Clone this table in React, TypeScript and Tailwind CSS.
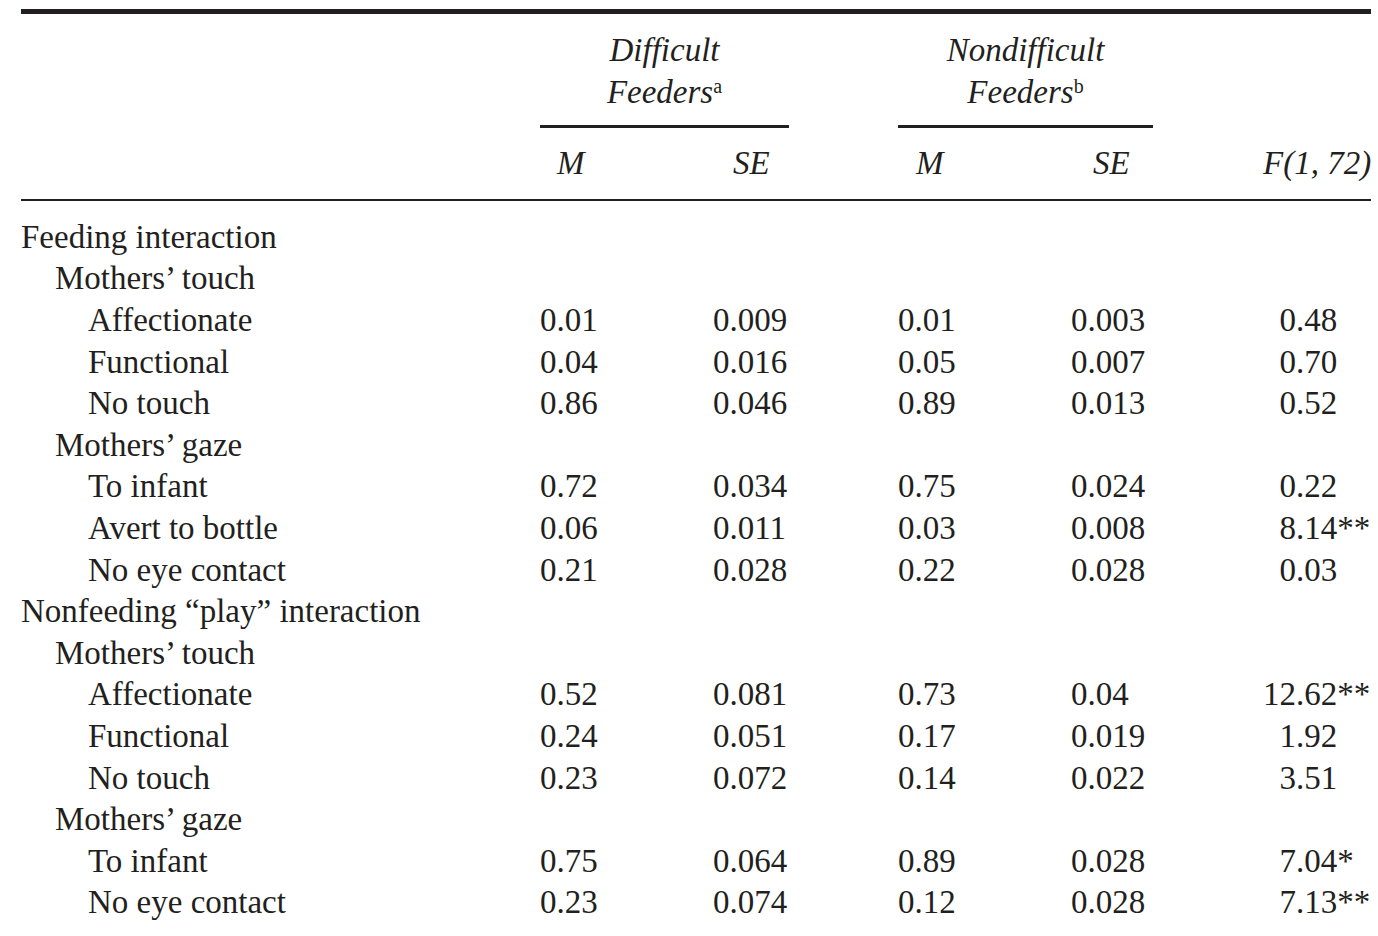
const rows: { label: string; level: number; vals?: string[]; f?: [string, string] }[] = [
  { label: 'Feeding interaction', level: 0 },
  { label: 'Mothers\u2019 touch', level: 1 },
  { label: 'Affectionate', level: 2, vals: ['0.01', '0.009', '0.01', '0.003'], f: ['0', '.48'] },
  { label: 'Functional', level: 2, vals: ['0.04', '0.016', '0.05', '0.007'], f: ['0', '.70'] },
  { label: 'No touch', level: 2, vals: ['0.86', '0.046', '0.89', '0.013'], f: ['0', '.52'] },
  { label: 'Mothers\u2019 gaze', level: 1 },
  { label: 'To infant', level: 2, vals: ['0.72', '0.034', '0.75', '0.024'], f: ['0', '.22'] },
  { label: 'Avert to bottle', level: 2, vals: ['0.06', '0.011', '0.03', '0.008'], f: ['8', '.14**'] },
  { label: 'No eye contact', level: 2, vals: ['0.21', '0.028', '0.22', '0.028'], f: ['0', '.03'] },
  { label: 'Nonfeeding \u201Cplay\u201D interaction', level: 0 },
  { label: 'Mothers\u2019 touch', level: 1 },
  { label: 'Affectionate', level: 2, vals: ['0.52', '0.081', '0.73', '0.04'], f: ['12', '.62**'] },
  { label: 'Functional', level: 2, vals: ['0.24', '0.051', '0.17', '0.019'], f: ['1', '.92'] },
  { label: 'No touch', level: 2, vals: ['0.23', '0.072', '0.14', '0.022'], f: ['3', '.51'] },
  { label: 'Mothers\u2019 gaze', level: 1 },
  { label: 'To infant', level: 2, vals: ['0.75', '0.064', '0.89', '0.028'], f: ['7', '.04*'] },
  { label: 'No eye contact', level: 2, vals: ['0.23', '0.074', '0.12', '0.028'], f: ['7', '.13**'] },
];

const indent = ['pl-0', 'pl-[34px]', 'pl-[67px]'];

export default function App() {
  return (
    <div className="w-[1378px] h-[936px] bg-white pt-[9px] pl-[21px] text-[#231f20] text-[33px] leading-[41.6px] font-['Liberation_Serif','Times_New_Roman',serif] overflow-hidden">
      <div className="w-[1350px]">
        <div className="h-[5px] bg-[#231f20]" />

        {/* header */}
        <div className="grid grid-cols-[519px_173px_185px_173px_192px_108px] pt-[16px] italic">
          <div />
          <div className="col-span-2 mr-[109px] text-center border-b-[3px] border-[#231f20] pb-[12px]">
            <div>Difficult</div>
            <div>
              Feeders<span className="not-italic text-[20px] align-[10px] leading-none">a</span>
            </div>
          </div>
          <div className="col-span-2 mr-[110px] text-center border-b-[3px] border-[#231f20] pb-[12px]">
            <div>Nondifficult</div>
            <div>
              Feeders<span className="not-italic text-[20px] align-[10px] leading-none">b</span>
            </div>
          </div>
          <div />

          <div className="mt-[15px]" />
          <div className="mt-[15px] pl-[17px]">M</div>
          <div className="mt-[15px] pl-[20px]">SE</div>
          <div className="mt-[15px] pl-[18px]">M</div>
          <div className="mt-[15px] pl-[22px]">SE</div>
          <div className="mt-[15px] whitespace-nowrap">F(1, 72)</div>
        </div>

        <div className="h-[2px] bg-[#231f20] mt-[14px]" />

        {/* body */}
        <div className="grid grid-cols-[519px_173px_185px_173px_192px_108px] pt-[16px]">
          {rows.map((r, i) => (
            <div key={i} className="contents">
              <div className={`${indent[r.level]} whitespace-nowrap`}>{r.label}</div>
              {r.vals ? (
                <>
                  {r.vals.map((v, j) => (
                    <div key={j}>{v}</div>
                  ))}
                  <div className="flex whitespace-nowrap">
                    <span className="w-[33px] text-right">{r.f![0]}</span>
                    <span>{r.f![1]}</span>
                  </div>
                </>
              ) : (
                <div className="col-span-5" />
              )}
            </div>
          ))}
        </div>
      </div>
    </div>
  );
}
